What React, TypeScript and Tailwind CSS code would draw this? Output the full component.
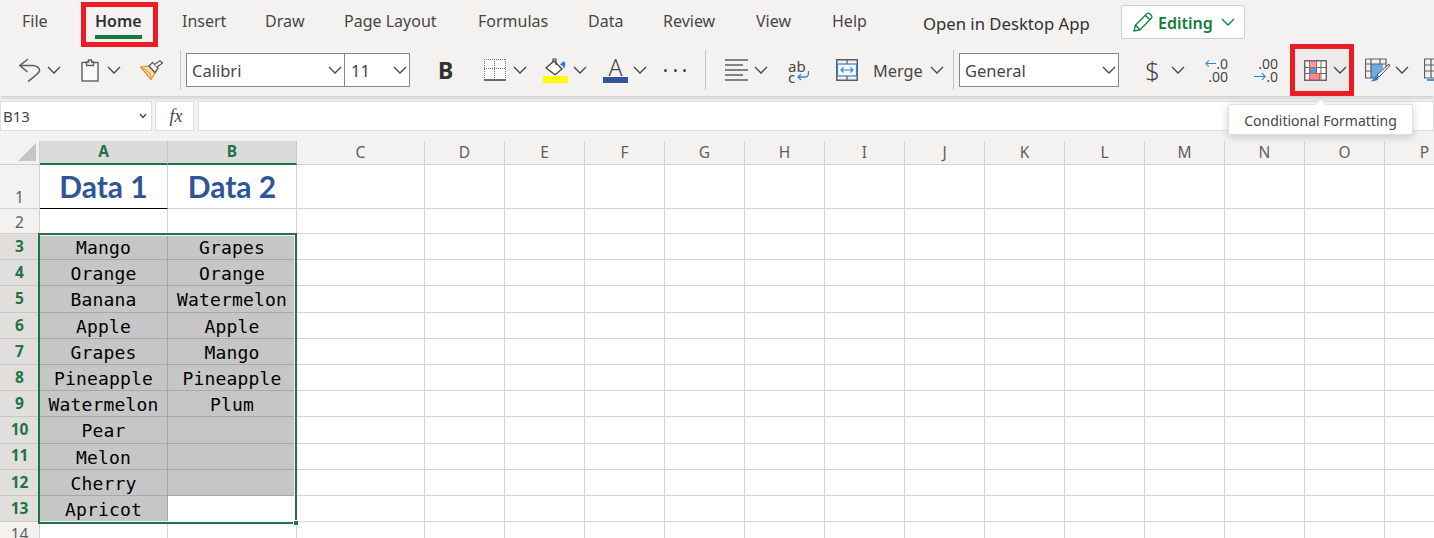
import React from "react";

const ui = "font-['Noto_Sans','Open_Sans',sans-serif]";

function Chev({ className = "ml-0", color = "#484644" }: { className?: string; color?: string }) {
  return (
    <svg width="14" height="8" viewBox="0 0 14 8" className={`shrink-0 ${className}`} fill="none" stroke={color} strokeWidth="1.3">
      <path d="M1 1 L7 7 L13 1" />
    </svg>
  );
}

function Undo() {
  return (
    <svg width="22" height="24" viewBox="0 0 22 24" className="ml-[19px] shrink-0" fill="none" stroke="#605e5c" strokeWidth="1.5">
      <path d="M9 1 L1 7.5 L8.5 14" />
      <path d="M1 7.5 H13 C18 7.5 21 10 20.5 13 C20 15 18 16.5 9 23.5" />
    </svg>
  );
}

function Clipboard() {
  return (
    <svg width="18" height="23" viewBox="0 0 18 23" className="ml-[20px] shrink-0" fill="none" stroke="#605e5c" strokeWidth="1.4">
      <rect x="1" y="3.5" width="16" height="18.5" fill="#fbfbfb" />
      <path d="M5.5 6.5 V3 H7.5 V1 H10.5 V3 H12.5 V6.5 Z" fill="#f3f2f1" />
    </svg>
  );
}

function Painter() {
  return (
    <svg width="23" height="20" viewBox="0 0 23 20" className="ml-[19px] shrink-0" fill="none">
      <path d="M0.5 7 L9 6 L15 13 L11 19.5 Z" fill="#fcd9ae" stroke="#ea8f27" strokeWidth="1.2" />
      <path d="M0.5 7 L10 13 L11 19.5" stroke="#ea8f27" strokeWidth="0.9" />
      <path d="M9 6 L12.5 2.5 L18 8 L15 12.5 Z" fill="#fff" stroke="#605e5c" strokeWidth="1.4" />
      <path d="M14.5 4.5 L20 0.8 L22.5 3 L17 7" fill="#fff" stroke="#605e5c" strokeWidth="1.3" />
    </svg>
  );
}

function Borders() {
  return (
    <svg width="22" height="22" viewBox="0 0 22 22" className="ml-[30px] shrink-0" fill="none">
      <rect x="0" y="0" width="22" height="20" fill="#fff" />
      <path
        d="M0 0.5 H22 M0 9.5 H22 M0.5 0 V20 M10.5 0 V20 M21.5 0 V20"
        stroke="#77757a"
        strokeWidth="1"
        strokeDasharray="1 1"
        shapeRendering="crispEdges"
      />
      <path d="M0 21 H22" stroke="#484644" strokeWidth="1.6" />
    </svg>
  );
}

function Fill() {
  return (
    <div className="ml-[16px] w-[25px] h-[25px] shrink-0 flex flex-col justify-between">
      <svg width="25" height="17" viewBox="0 0 25 17" fill="none">
        <path d="M3 10 L11 3 L19 11 L13 16 Q12 17 11 16 Z" stroke="#484644" strokeWidth="1.3" fill="#fff" />
        <path d="M10 4 V1 H13 V7" stroke="#484644" strokeWidth="1.2" />
        <path d="M17 7 Q20 2 22 4 Q23 7 21 11 Q20 7 17 7 Z" fill="#2b7cd3" />
      </svg>
      <div className="h-[7px] bg-[#ffff00]" />
    </div>
  );
}

function FontColor() {
  return (
    <div className="ml-[16px] w-[25px] h-[25px] shrink-0 flex flex-col items-center justify-between">
      <span className={`${ui} font-light text-[23px] leading-[19px] text-[#484644]`}>A</span>
      <div className="w-full h-[6px] bg-[#2f5597]" />
    </div>
  );
}

function Dots() {
  return (
    <div className="ml-[17px] w-[22px] flex justify-between shrink-0">
      <div className="w-[3px] h-[3px] rounded-full bg-[#484644]" />
      <div className="w-[3px] h-[3px] rounded-full bg-[#484644]" />
      <div className="w-[3px] h-[3px] rounded-full bg-[#484644]" />
    </div>
  );
}

function Align() {
  return (
    <svg width="23" height="22" viewBox="0 0 23 22" className="ml-[19px] shrink-0" stroke="#605e5c" strokeWidth="1.3">
      <path d="M0 1 H23 M0 6 H18 M0 11 H23 M0 16 H18 M0 21 H23" />
    </svg>
  );
}

function Wrap() {
  return (
    <div className="ml-[20px] w-[22px] h-[24px] pt-[3px] shrink-0 relative">
      <span className={`${ui} block text-[15px] leading-[11px] text-[#484644]`}>ab</span>
      <span className={`${ui} block text-[15px] leading-[10px] text-[#484644]`}>c</span>
      <svg width="13" height="10" viewBox="0 0 13 10" className="absolute right-0 bottom-[1px]" fill="none" stroke="#2b88d8" strokeWidth="1.3">
        <path d="M11.5 0 V2 Q11.5 6 8 6 H1 M4 3 L1 6 L4 9" />
      </svg>
    </div>
  );
}

function MergeIcon() {
  return (
    <svg width="22" height="22" viewBox="0 0 22 22" className="ml-[26px] shrink-0" fill="none">
      <rect x="0.75" y="0.75" width="20.5" height="20.5" stroke="#605e5c" strokeWidth="1.5" />
      <path d="M11 1 V5 M11 17 V21" stroke="#605e5c" strokeWidth="1.3" />
      <rect x="1.5" y="5" width="19" height="12" stroke="#2b88d8" strokeWidth="1.2" fill="#f8f8f8" />
      <path d="M5 11 H17 M7.5 8.5 L5 11 L7.5 13.5 M14.5 8.5 L17 11 L14.5 13.5" stroke="#2b88d8" strokeWidth="1.1" />
    </svg>
  );
}

function CondFmt() {
  return (
    <svg width="23" height="21" viewBox="0 0 23 21" className="ml-[9px] shrink-0" fill="none">
      <rect x="0.5" y="0.5" width="22" height="20" fill="#fff" />
      <path d="M0 7.5 H23 M0 13.5 H23 M5.5 0 V21 M12.5 0 V21 M17 0 V21" stroke="#6b6968" strokeWidth="1" />
      <rect x="5.5" y="0.5" width="7" height="7" fill="#ff9a9a" stroke="#e85454" strokeWidth="1" />
      <rect x="6" y="8" width="6" height="5" fill="#4a9fe0" />
      <rect x="5.5" y="13.5" width="10" height="7" fill="#ff8a8a" stroke="#e85454" strokeWidth="1" />
      <rect x="0.75" y="0.75" width="21.5" height="19.5" stroke="#6b6968" strokeWidth="1.5" />
    </svg>
  );
}

function TablePen() {
  return (
    <svg width="25" height="24" viewBox="0 0 25 24" className="ml-[16px] shrink-0" fill="none">
      <path d="M6 6 H18 V11 L9 20 H6 Z" fill="#69aee8" />
      <path d="M0.5 1 H21 V10 M0.5 1 V20 H9 M0.5 6 H21 M6 1 V20 M15 1 V6 M0.5 13 H6" stroke="#605e5c" strokeWidth="1.2" />
      <path d="M24 6 L12 17 L14 19 L24.5 8 Z" fill="#fff" stroke="#484644" strokeWidth="1" />
      <path d="M11 17 L14 20 Q11 24 6 23 Q9 21 11 17 Z" fill="#2b7cd3" />
    </svg>
  );
}

function PartialIcon() {
  return (
    <svg width="22" height="24" viewBox="0 0 22 24" className="ml-[15px] shrink-0" fill="none" stroke="#605e5c" strokeWidth="1.2">
      <path d="M0.5 1 H21 V20 H0.5 Z M0.5 7 H21 M0.5 13 H21 M7 1 V20" />
      <path d="M3 22 H12" stroke="#2b7cd3" strokeWidth="1.6" />
    </svg>
  );
}

function Sep({ className }: { className: string }) {
  return <div className={`w-px h-[40px] bg-[#c8c6c4] shrink-0 ${className}`} />;
}

const tabs: [string, string][] = [
  ["File", "w-[73px]"],
  ["Home", "w-[87px]"],
  ["Insert", "w-[83px]"],
  ["Draw", "w-[79px]"],
  ["Page Layout", "w-[134px]"],
  ["Formulas", "w-[110px]"],
  ["Data", "w-[75px]"],
  ["Review", "w-[93px]"],
  ["View", "w-[76px]"],
  ["Help", "w-[91px]"],
];

function TabRow() {
  return (
    <div className={`${ui} h-[44px] flex items-start pl-[22px] text-[16px] text-[#484644]`}>
      {tabs.map(([t, w]) => (
        <div key={t} className={`${w} shrink-0 pt-[10px] leading-[22px] relative`}>
          {t === "Home" ? (
            <span className="relative inline-block font-semibold text-[#323130]">
              Home
              <span className="absolute left-0 right-0 top-[25px] h-[4px] bg-[#107c41]" />
              <span className="absolute -left-[14px] -right-[16px] -top-[8px] h-[45px] border-[5px] border-[#ed1c24]" />
            </span>
          ) : (
            t
          )}
        </div>
      ))}
      <div className="w-[198px] shrink-0 pt-[12px] leading-[24px] text-[16.7px] text-[#323130]">Open in Desktop App</div>
      <div className="w-[124px] h-[34px] mt-[5px] shrink-0 bg-white border border-[#d2d0ce] rounded-[2px] flex items-center pl-[11px]">
        <svg width="20" height="20" viewBox="0 0 20 20" fill="none" stroke="#107c41" strokeWidth="1.3">
          <path d="M1 19 L2.5 13 L14 1.5 Q15.5 0.5 17 2 L18.5 3.5 Q19.5 5 18 6.5 L7 18 Z M12.5 3.5 L16.5 7.5 M2.5 13 L7 18" />
        </svg>
        <span className="ml-[5px] pt-[2px] font-semibold text-[16px] text-[#107c41]">Editing</span>
        <Chev className="ml-[8px]" color="#107c41" />
      </div>
    </div>
  );
}

function ToolRow() {
  return (
    <div className={`${ui} h-[52px] flex items-center overflow-hidden text-[#484644]`}>
      <Undo />
      <Chev className="ml-[6px]" />
      <Clipboard />
      <Chev className="ml-[8px]" />
      <Painter />
      <Sep className="ml-[17px]" />
      <div className="ml-[5px] w-[159px] h-[34px] shrink-0 bg-white border border-[#8a8886] flex items-center justify-between pl-[5px] pr-[2px] text-[16.5px]">
        <span className="pt-[2px]">Calibri</span>
        <Chev />
      </div>
      <div className="w-[65px] h-[34px] shrink-0 bg-white border border-l-0 border-[#8a8886] flex items-center justify-between pl-[6px] pr-[2px] text-[16.5px]">
        <span className="pt-[2px]">11</span>
        <Chev />
      </div>
      <span className="ml-[28px] w-[16px] shrink-0 font-bold text-[23px] leading-none text-[#323130]">B</span>
      <Borders />
      <Chev className="ml-[7px]" />
      <Fill />
      <Chev className="ml-[5px]" />
      <FontColor />
      <Chev className="ml-[5px]" />
      <Dots />
      <Sep className="ml-[19px]" />
      <Align />
      <Chev className="ml-[6px]" />
      <Wrap />
      <MergeIcon />
      <span className="ml-[15px] w-[50px] shrink-0 pt-[3px] text-[16.3px]">Merge</span>
      <Chev className="ml-[7px]" />
      <Sep className="ml-[9px]" />
      <div className="ml-[5px] w-[160px] h-[34px] shrink-0 bg-white border border-[#8a8886] flex items-center justify-between pl-[5px] pr-[2px] text-[16.5px]">
        <span className="pt-[2px]">General</span>
        <Chev />
      </div>
      <span className="ml-[28px] w-[11px] shrink-0 font-light text-[26px] leading-none flex justify-center">$</span>
      <Chev className="ml-[13px]" />
      <div className="ml-[20px] w-[23px] shrink-0 text-[14px] leading-[13px] text-[#484644]">
        <div className="flex justify-between items-center">
          <svg width="13" height="9" viewBox="0 0 13 9" fill="none" stroke="#2b88d8" strokeWidth="1.2">
            <path d="M13 4.5 H1 M4.5 1 L1 4.5 L4.5 8" />
          </svg>
          <span>.0</span>
        </div>
        <div className="text-right">.00</div>
      </div>
      <div className="ml-[26px] w-[24px] shrink-0 text-[14px] leading-[13px] text-[#484644]">
        <div className="text-right">.00</div>
        <div className="flex justify-between items-center">
          <svg width="13" height="9" viewBox="0 0 13 9" fill="none" stroke="#2b88d8" strokeWidth="1.2">
            <path d="M0 4.5 H12 M8.5 1 L12 4.5 L8.5 8" />
          </svg>
          <span>.0</span>
        </div>
      </div>
      <div className="ml-[17px] w-[54px] h-[42px] shrink-0 bg-[#edebe9] flex items-center relative">
        <CondFmt />
        <Chev className="ml-[6px]" />
        <span className="absolute -inset-[5px] border-[5px] border-[#ed1c24]" />
      </div>
      <TablePen />
      <Chev className="ml-[5px]" />
      <PartialIcon />
    </div>
  );
}

function FormulaBar() {
  return (
    <div className={`${ui} h-[45px] pt-[5px] flex items-start bg-[#f3f2f1]`}>
      <div className="w-[152px] h-[30px] shrink-0 bg-white border border-[#e1dfdd] flex items-center justify-between pl-[2px] pr-[3px] text-[15px] text-[#484644]">
        <span className="pt-[1px]">B13</span>
        <svg width="10" height="6" viewBox="0 0 10 6" fill="none" stroke="#484644" strokeWidth="1.3">
          <path d="M2 1 L5 4.5 L8 1" />
        </svg>
      </div>
      <div className="ml-[3px] w-[39px] h-[30px] pl-[3px] shrink-0 bg-white border border-[#e1dfdd] flex items-center justify-center font-['Liberation_Serif',serif] italic text-[18px] text-[#484644]">
        fx
      </div>
      <div className="ml-[4px] flex-1 h-[30px] bg-white border border-[#e1dfdd]" />
    </div>
  );
}

const cols = ["A", "B", "C", "D", "E", "F", "G", "H", "I", "J", "K", "L", "M", "N", "O", "P"];
const data1 = ["Mango", "Orange", "Banana", "Apple", "Grapes", "Pineapple", "Watermelon", "Pear", "Melon", "Cherry", "Apricot"];
const data2 = ["Grapes", "Orange", "Watermelon", "Apple", "Mango", "Pineapple", "Plum", "", "", "", ""];
const rowNums = Array.from({ length: 14 }, (_, i) => i + 1);

function Sheet() {
  return (
    <div className={`${ui} relative grid grid-cols-[40px_128px_129px_128px_repeat(13,80px)] grid-rows-[24px_44px_25px_repeat(12,26.2px)] bg-white overflow-hidden`}>
      <div className="bg-[#f3f2f1] border-r border-b border-[#d2d0ce] relative">
        <svg width="18" height="18" viewBox="0 0 18 18" className="absolute left-[18px] top-[2px]">
          <path d="M18 0 V18 H0 Z" fill="#c8c6c4" />
        </svg>
      </div>
      {cols.map((c) => {
        const sel = c === "A" || c === "B";
        return (
          <div
            key={c}
            className={
              sel
                ? "flex items-center justify-center font-bold text-[15.5px] text-[#217346] bg-[#dcdbd9] border-r border-[#c8c6c4] border-b-2 border-b-[#217346]"
                : "flex items-center justify-center text-[15.5px] text-[#605e5c] bg-[#f3f2f1] border-r border-b border-[#d2d0ce]"
            }
          >
            {c}
          </div>
        );
      })}
      {rowNums.map((r) => {
        const sel = r >= 3 && r <= 13;
        const v1 = r === 1 ? "Data 1" : r >= 3 && r <= 13 ? data1[r - 3] : "";
        const v2 = r === 1 ? "Data 2" : r >= 3 && r <= 13 ? data2[r - 3] : "";
        return (
          <React.Fragment key={r}>
            <div
              className={
                sel
                  ? "flex items-center justify-center font-bold text-[15.5px] text-[#217346] bg-[#e1dfdd] border-r border-b border-[#c8c6c4]"
                  : r === 14
                    ? "flex items-center justify-center text-[15.5px] text-[#605e5c] bg-[#f3f2f1] border-r border-b border-[#d2d0ce]"
                    : "flex items-end justify-center text-[15.5px] leading-[22px] text-[#605e5c] bg-[#f3f2f1] border-r border-b border-[#d2d0ce]"
              }
            >
              {r}
            </div>
            {cols.map((c) => {
              if (c === "A" || c === "B") {
                const v = c === "A" ? v1 : v2;
                if (r === 1) {
                  return (
                    <div
                      key={c}
                      className={`flex items-center justify-center font-['Lato',sans-serif] font-bold text-[30px] text-[#2f5597] border-r border-[#d4d4d4] border-b ${c === "A" ? "border-b-black" : "border-b-[#d4d4d4]"}`}
                    >
                      {v}
                    </div>
                  );
                }
                if (sel && !(r === 13 && c === "B")) {
                  return (
                    <div
                      key={c}
                      className="flex items-center justify-center pt-[2px] font-['DejaVu_Sans_Mono',monospace] text-[18px] tracking-[0.16px] text-black bg-[#c6c6c6] border-r border-b border-[#a8a8a8]"
                    >
                      {v}
                    </div>
                  );
                }
              }
              return <div key={c} className="border-r border-b border-[#d4d4d4]" />;
            })}
          </React.Fragment>
        );
      })}
      <div className="absolute left-[38px] top-[92px] w-[259px] h-[291px] border-2 border-[#217346] pointer-events-none">
        <div className="absolute inset-0 border-t border-r border-b border-white opacity-80" />
        <div className="absolute -right-[4px] -bottom-[4px] w-[6px] h-[6px] bg-[#217346] border border-white" />
      </div>
    </div>
  );
}

function Tooltip() {
  return (
    <div className={`${ui} absolute left-[1228px] top-[104px] z-20 w-[185px] h-[31px] pt-[2px] bg-white border border-[#e1dfdd] rounded-[2px] shadow-[0_2px_8px_rgba(0,0,0,0.18)] flex items-center justify-center text-[14px] text-[#484644]`}>
      Conditional Formatting
      <span className="absolute left-[87px] -top-[5px] w-[9px] h-[9px] rotate-45 bg-white border-l border-t border-[#e1dfdd]" />
    </div>
  );
}

export default function App() {
  return (
    <div className="relative w-[1434px] h-[538px] overflow-hidden bg-white">
      <div className="relative z-10 bg-[#f3f2f1] h-[96px] shadow-[0_2px_4px_rgba(0,0,0,0.16)]">
        <TabRow />
        <ToolRow />
      </div>
      <FormulaBar />
      <Sheet />
      <Tooltip />
    </div>
  );
}
